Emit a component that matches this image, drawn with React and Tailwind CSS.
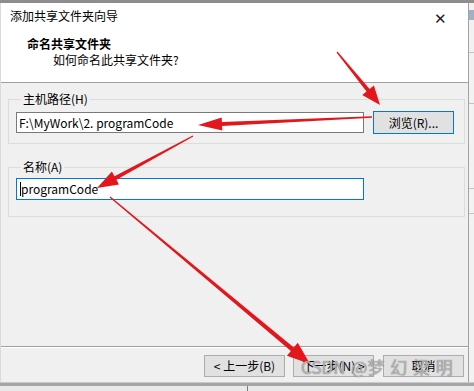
import React from "react";

// tapered annotation arrow, thin at the tail and wide at the head
function arrowPoints(x1, y1, x2, y2, hl, hw, w0, w1) {
  const dx = x2 - x1;
  const dy = y2 - y1;
  const len = Math.hypot(dx, dy);
  const ux = dx / len;
  const uy = dy / len;
  const nx = -uy;
  const ny = ux;
  const bx = x2 - ux * hl;
  const by = y2 - uy * hl;
  const pts = [
    [x1 + (nx * w0) / 2, y1 + (ny * w0) / 2],
    [bx + (nx * w1) / 2, by + (ny * w1) / 2],
    [bx + nx * hw, by + ny * hw],
    [x2, y2],
    [bx - nx * hw, by - ny * hw],
    [bx - (nx * w1) / 2, by - (ny * w1) / 2],
    [x1 - (nx * w0) / 2, y1 - (ny * w0) / 2],
  ];
  return pts.map((p) => p[0].toFixed(1) + "," + p[1].toFixed(1)).join(" ");
}

const ARROWS = [
  [337, 52, 380, 105, 19, 7.5, 1.4, 4],
  [372, 117, 198, 125, 24, 6.5, 1.4, 4],
  [193, 136, 97, 188, 21, 7.5, 1.4, 4],
  [110, 197, 310, 364, 23, 8.5, 1.4, 4.5],
];

function WinButton({ children, focused }) {
  return (
    <button
      className={
        focused
          ? "w-[81px] h-[23px] border border-[#0078d7] bg-[#e1e1e1] text-[12px] leading-[14px] text-black"
          : "w-[81px] h-[22px] border border-[#adadad] bg-[#e1e1e1] text-[12px] leading-[14px] text-black"
      }
    >
      {children}
    </button>
  );
}

export default function App() {
  return (
    <div className="relative w-[474px] h-[391px] overflow-hidden bg-[#e8e8e8] font-['Noto_Sans_CJK_SC',sans-serif] text-[12px] text-black">
      {/* top edge of the window behind */}
      <div className="h-[3px] bg-[#8d8d8d]" />

      <div className="flex h-[379px]">
        {/* dialog */}
        <div className="w-[468px] flex flex-col border-l border-[#dadada]">
          {/* header */}
          <div className="h-[80px] bg-white border-b border-[#a0a0a0] relative">
            <div className="pt-[6px] pl-[9px] leading-[14px]">添加共享文件夹向导</div>
            <div className="mt-[14px] pl-[26px] leading-[14px] font-bold">命名共享文件夹</div>
            <div className="mt-[2px] pl-[52px] leading-[14px]">如何命名此共享文件夹?</div>
            <span className="absolute top-[8px] left-[433px] text-[15px] leading-[14px] font-light text-[#222]">✕</span>
          </div>

          {/* body */}
          <div className="flex-1 bg-[#f0f0f0] pl-[7px] pt-[9px] border-b border-[#a0a0a0]">
            <fieldset className="w-[457px] border border-[#dcdcdc] pl-[7px] pr-[10px] pb-[9px]">
              <legend className="ml-[5px] px-[2px] leading-[14px]">主机路径(H)</legend>
              <div className="mt-[5px] flex items-center justify-between">
                <div className="w-[348px] h-[21px] border border-[#7a7a7a] bg-white pl-[2px] flex items-center leading-[14px]">
                  {"F:\\MyWork\\2. programCode"}
                </div>
                <WinButton focused>浏览(R)...</WinButton>
              </div>
            </fieldset>

            <fieldset className="mt-[16px] w-[457px] border border-[#dcdcdc] pl-[7px] pr-[10px] pb-[16px]">
              <legend className="ml-[5px] px-[2px] leading-[14px]">名称(A)</legend>
              <div className="mt-[4px] w-[348px] h-[22px] border border-[#0078d7] bg-white pl-[3px] flex items-center leading-[14px]">
                <span className="w-px h-[14px] bg-black" />
                <span>programCode</span>
              </div>
            </fieldset>
          </div>

          {/* buttons */}
          <div className="h-[35px] bg-[#f0f0f0] border-t border-white flex justify-end items-start pt-[7px] pr-[4px] gap-[8px]">
            <WinButton>&lt; 上一步(B)</WinButton>
            <WinButton>下一步(N) &gt;</WinButton>
            <div className="ml-px">
              <WinButton>取消</WinButton>
            </div>
          </div>
        </div>

        {/* sliver of the window behind */}
        <div className="flex-1 border-l border-[#a2a2a2] bg-[#f2f2f2] flex flex-col">
          <div className="mt-[7px] h-[10px] bg-[#9fb2c4]" />
          <div className="mt-[32px] h-px bg-[#c4c4c4]" />
          <div className="mt-[50px] h-px bg-[#c4c4c4]" />
          <div className="mt-[84px] h-px bg-[#c4c4c4]" />
          <div className="mt-[24px] h-px bg-[#c4c4c4]" />
        </div>
      </div>

      {/* shadow below the dialog */}
      <div className="h-px bg-[#c9c9c9]" />
      <div className="h-[3px] bg-[#a6a6a6]" />
      <div className="h-[5px] bg-[#e9e9e9] pl-[247px]">
        <div className="w-px h-full bg-[#7a7a7a]" />
      </div>

      {/* red annotation arrows */}
      <svg className="absolute inset-0 pointer-events-none" width="474" height="391" viewBox="0 0 474 391">
        {ARROWS.map((a, i) => (
          <polygon key={i} points={arrowPoints(...a)} fill="#e3161b" />
        ))}
      </svg>

      {/* watermark */}
      <div className="absolute left-[301px] top-[357px] text-[17px] leading-[20px] text-[#c4c4c4]/80 [word-spacing:2px] [text-shadow:0_0_1px_#5e5e5e] pointer-events-none">
        CSDN @梦 幻 梁 明
      </div>
    </div>
  );
}
